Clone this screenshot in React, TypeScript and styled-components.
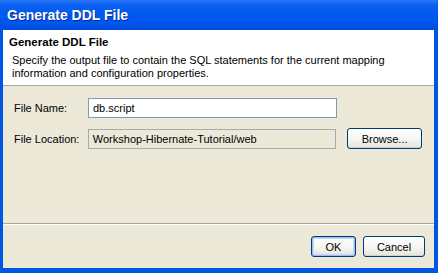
import React from "react";
import styled, { createGlobalStyle } from "styled-components";

const GlobalStyle = createGlobalStyle`
    html, body {
        margin: 0;
        padding: 0;
        background: #ece9d8;
    }
    body {
        font-family: "Liberation Sans", Arial, sans-serif;
        font-size: 11px;
    }
`;

// Outer XP window frame
const Window = styled.div`
    width: 438px;
    height: 273px;
    display: flex;
    flex-direction: column;
    background: #0055e5;
    box-sizing: border-box;
`;

const TitleBar = styled.div`
    height: 30px;
    flex: none;
    display: flex;
    align-items: center;
    padding-left: 7px;
    background: linear-gradient(
        to bottom,
        #2a76f7 0%,
        #0c62f2 15%,
        #0059ef 45%,
        #0056eb 75%,
        #004ade 100%
    );
`;

const TitleText = styled.span`
    font-family: "Liberation Sans", Arial, sans-serif;
    font-weight: bold;
    font-size: 14px;
    color: #ffffff;
    text-shadow: 1px 1px 0 #0a2a9c;
`;

const Client = styled.div`
    flex: 1;
    display: flex;
    flex-direction: column;
    margin: 0 4px 5px 3px;
    background: #ece9d8;
`;

const Header = styled.div`
    height: 56px;
    flex: none;
    background: #ffffff;
    border-bottom: 1px solid #aca899;
    padding: 6px 0 0 6px;
    box-sizing: border-box;
`;

const HeaderTitle = styled.div`
    font-weight: bold;
    font-size: 11.5px;
    color: #000000;
    margin-bottom: 6px;
`;

const Description = styled.div`
    font-size: 11px;
    line-height: 13px;
    color: #000000;
    padding-left: 3px;
    white-space: nowrap;
`;

const Body = styled.div`
    flex: 1;
    padding: 11px 12px 0 11px;
    display: flex;
    flex-direction: column;
    gap: 10px;
    border-bottom: 1px solid #aca899;
    box-shadow: 0 1px 0 #ffffff;
`;

const Row = styled.div`
    display: flex;
    align-items: center;
    height: 21px;
`;

const Label = styled.label`
    width: 74px;
    font-size: 11px;
    color: #000000;
`;

const Field = styled.div<{ $readOnly?: boolean }>`
    width: 249px;
    height: 20px;
    box-sizing: border-box;
    border: 1px solid ${({ $readOnly }) => ($readOnly ? "#a5acb2" : "#7f9db9")};
    background: ${({ $readOnly }) => ($readOnly ? "#ece9d8" : "#ffffff")};
    display: flex;
    align-items: center;
    padding-left: 4px;
    font-size: 11px;
    color: #000000;
`;

const Button = styled.button<{ $default?: boolean; $width: number }>`
    width: ${({ $width }) => $width}px;
    height: 21px;
    box-sizing: border-box;
    border: 1px solid #003c74;
    border-radius: 3px;
    background: linear-gradient(to bottom, #ffffff 0%, #f4f4f0 60%, #e3e2da 100%);
    box-shadow: ${({ $default }) =>
        $default ? "inset 0 0 0 1px #9dbcf0, inset 0 0 0 2px #c7d8f6" : "inset 0 -1px 0 #d6d0c5"};
    font-family: "Liberation Sans", Arial, sans-serif;
    font-size: 11px;
    color: #000000;
    padding: 0;
`;

const BrowseButton = styled(Button)`
    margin-left: 11px;
`;

const Footer = styled.div`
    height: 43px;
    flex: none;
    display: flex;
    justify-content: flex-end;
    align-items: center;
    gap: 7px;
    padding: 0 9px 0 0;
    margin-top: 1px;
`;

export default function App() {
    return (
        <>
            <GlobalStyle />
            <Window>
                <TitleBar>
                    <TitleText>Generate DDL File</TitleText>
                </TitleBar>
                <Client>
                    <Header>
                        <HeaderTitle>Generate DDL File</HeaderTitle>
                        <Description>
                            Specify the output file to contain the SQL statements for the current mapping
                            <br />
                            information and configuration properties.
                        </Description>
                    </Header>
                    <Body>
                        <Row>
                            <Label>File Name:</Label>
                            <Field>db.script</Field>
                        </Row>
                        <Row>
                            <Label>File Location:</Label>
                            <Field $readOnly>Workshop-Hibernate-Tutorial/web</Field>
                            <BrowseButton $width={75}>Browse...</BrowseButton>
                        </Row>
                    </Body>
                    <Footer>
                        <Button $default $width={45}>OK</Button>
                        <Button $width={62}>Cancel</Button>
                    </Footer>
                </Client>
            </Window>
        </>
    );
}
